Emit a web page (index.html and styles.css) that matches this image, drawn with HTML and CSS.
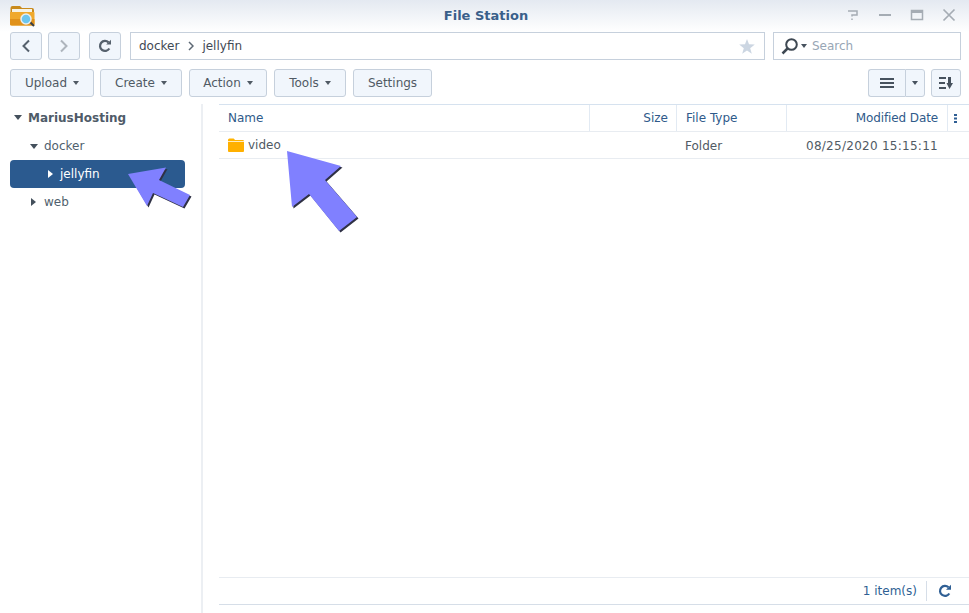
FILE: index.html
```html
<!DOCTYPE html>
<html>
<head>
<meta charset="utf-8">
<title>File Station</title>
<link rel="stylesheet" href="styles.css">
</head>
<body>
<div class="app">
  <header class="titlebar">
    <svg class="app-icon" width="26" height="22" viewBox="0 0 26 22">
      <path d="M0.5 3 Q0.5 1 2.5 1 H10 L12 3 H22 Q24 3 24 5 V8 H0.5Z" fill="#c98a1c"/>
      <rect x="2" y="4" width="20" height="4" fill="#f6f3e6"/>
      <path d="M0 7 H24 Q24.500 7 24.500 8 V19 Q24.500 20.500 23 20.500 H2 Q0 20.500 0 19Z" fill="#f0a92c"/>
      <path d="M0 14 H24.500 V19 Q24.500 20.500 23 20.500 H2 Q0 20.500 0 19Z" fill="#e0911b"/>
      <line x1="20" y1="17" x2="24" y2="21" stroke="#3a3f45" stroke-width="2"/>
      <circle cx="16" cy="14" r="5" fill="#6cc6ef" stroke="#e9eef0" stroke-width="1.500"/>
    </svg>
    <div class="title">File Station</div>
    <div class="win-ctrls">
      <svg width="14" height="14" viewBox="0 0 14 14"><path d="M2 3 H11 V7 H6 V8.500 M6 10.500 V12" fill="none" stroke="#a5acb4" stroke-width="1.500"/></svg>
      <svg width="14" height="14" viewBox="0 0 14 14"><rect x="1" y="6" width="12" height="2" fill="#a5acb4"/></svg>
      <svg width="14" height="14" viewBox="0 0 14 14"><rect x="1.500" y="2.500" width="11" height="9" fill="none" stroke="#a5acb4" stroke-width="1.500"/><rect x="1" y="2" width="12" height="3" fill="#a5acb4"/></svg>
      <svg width="14" height="14" viewBox="0 0 14 14"><path d="M1.500 1.500 L12.500 12.500 M12.500 1.500 L1.500 12.500" stroke="#a5acb4" stroke-width="1.700"/></svg>
    </div>
  </header>

  <div class="nav-row">
    <button class="btn square"><svg width="10" height="14" viewBox="0 0 10 14"><path d="M8 1.500 L2.500 7 L8 12.500" fill="none" stroke="#56616d" stroke-width="2"/></svg></button>
    <button class="btn square"><svg width="10" height="14" viewBox="0 0 10 14"><path d="M2 1.500 L7.500 7 L2 12.500" fill="none" stroke="#aeb5bd" stroke-width="2"/></svg></button>
    <button class="btn square refresh"><svg width="14" height="14" viewBox="0 0 14 14"><path d="M11.300 9.500 A5 5 0 1 1 10.500 3.300" fill="none" stroke="#56616d" stroke-width="2.300"/><path d="M8.200 5.600 H13 V0.800Z" fill="#56616d"/></svg></button>
    <div class="path-box">
      <span>docker</span>
      <svg class="crumb" width="6" height="10" viewBox="0 0 6 10"><path d="M1 1 L5 5 L1 9" fill="none" stroke="#5d6874" stroke-width="1.500"/></svg>
      <span>jellyfin</span>
      <svg class="star" width="16" height="15" viewBox="0 0 16 15"><path d="M8 0 L10 5.300 L15.800 5.600 L11.200 9.200 L12.800 14.800 L8 11.600 L3.200 14.800 L4.800 9.200 L0.200 5.600 L6 5.300Z" fill="#ccd6e2"/></svg>
    </div>
    <div class="search-box">
      <svg width="17" height="17" viewBox="0 0 17 17"><circle cx="10.500" cy="6.500" r="5.300" fill="none" stroke="#3e4852" stroke-width="2"/><line x1="6.500" y1="10.500" x2="1.500" y2="15.500" stroke="#3e4852" stroke-width="2.500"/></svg>
      <i class="caret dark"></i>
      <span>Search</span>
    </div>
  </div>

  <div class="tool-row">
    <button class="btn upload">Upload<i class="caret"></i></button>
    <button class="btn create">Create<i class="caret"></i></button>
    <button class="btn action">Action<i class="caret"></i></button>
    <button class="btn tools">Tools<i class="caret"></i></button>
    <button class="btn settings">Settings</button>
    <div class="spacer"></div>
    <div class="split">
      <button class="btn view"><svg width="14" height="10" viewBox="0 0 14 10"><path d="M0 0H14V2H0ZM0 4H14V6H0ZM0 8H14V10H0Z" fill="#47525e"/></svg></button>
      <button class="btn drop"><i class="caret dark"></i></button>
    </div>
    <button class="btn sort"><svg width="14" height="12" viewBox="0 0 14 12"><path d="M0 0H7V2H0ZM0 5H6V7H0ZM0 10H7V12H0Z" fill="#47525e"/><path d="M9 0H12V6H14L10.500 12L7.500 6H9Z" fill="#47525e"/></svg></button>
  </div>

  <div class="body">
    <aside class="tree">
      <div class="node root"><i class="tri down"></i>MariusHosting</div>
      <div class="node lvl1"><i class="tri down"></i>docker</div>
      <div class="node lvl2 selected"><i class="tri right white"></i>jellyfin</div>
      <div class="node lvl1"><i class="tri right"></i>web</div>
    </aside>
    <main class="list">
      <div class="thead">
        <div class="col c-name">Name</div>
        <div class="col c-size">Size</div>
        <div class="col c-type">File Type</div>
        <div class="col c-date"><span class="date-head">Modified Date</span></div>
        <div class="col c-more"><svg width="3" height="9" viewBox="0 0 3 9"><path d="M0 0H3V2H0ZM0 3.500H3V5.500H0ZM0 7H3V9H0Z" fill="#2f5f94"/></svg></div>
      </div>
      <div class="row">
        <div class="cell c-name">
          <svg class="folder" width="16" height="14" viewBox="0 0 17 14" preserveAspectRatio="none"><path d="M0 2 Q0 0.500 1.500 0.500 H6 L7.500 2 H15.500 Q17 2 17 3 H0Z" fill="#ffb300"/><path d="M0 3.800 H17 V13 Q17 14 16 14 H1 Q0 14 0 13Z" fill="#ffb000"/></svg>
          <span>video</span>
        </div>
        <div class="cell c-size"></div>
        <div class="cell c-type">Folder</div>
        <div class="cell c-date">08/25/2020 15:15:11</div>
        <div class="cell c-more"></div>
      </div>
      <div class="fill"></div>
      <footer class="status">
        <span>1 item(s)</span>
        <i class="sep"></i>
        <svg width="14" height="14" viewBox="0 0 14 14"><path d="M11.300 9.500 A5 5 0 1 1 10.500 3.300" fill="none" stroke="#2f5f94" stroke-width="2.200"/><path d="M8 5.800 H13 V0.800Z" fill="#2f5f94"/></svg>
      </footer>
    </main>
  </div>

  <svg class="arrow arrow-a" width="68" height="46" viewBox="0 0 68 46">
    <path d="M1 8 L39 1.500 L32 14 L63 29 L56 41 L26 27 L20 40Z" fill="#2f3145" transform="translate(1.500 1.500)"/>
    <path d="M1 8 L39 1.500 L32 14 L63 29 L56 41 L26 27 L20 40Z" fill="#8080ff"/>
  </svg>
  <svg class="arrow arrow-b" width="76" height="86" viewBox="0 0 76 86">
    <path d="M1 1 L55 16 L39 30 L71 67 L53 81 L23 44 L6 57Z" fill="#2f3145" transform="translate(1.500 1.500)"/>
    <path d="M1 1 L55 16 L39 30 L71 67 L53 81 L23 44 L6 57Z" fill="#8080ff"/>
  </svg>
</div>
</body>
</html>
```

FILE: styles.css
```css
* { box-sizing: border-box; }
html, body { margin: 0; padding: 0; height: 100%; }
body { background: #fff; font-family: "DejaVu Sans", Verdana, sans-serif; font-size: 12px; color: #505a64; overflow: hidden; }
.app { position: relative; width: 969px; height: 613px; display: flex; flex-direction: column; background: linear-gradient(#e4e9f1 0, #ffffff 32px); }

.titlebar { height: 32px; display: flex; align-items: center; position: relative; padding: 0 10px; flex: none; }
.app-icon { position: absolute; left: 10px; top: 5px; }
.title { flex: 1; text-align: center; font-weight: 700; font-size: 13px; color: #3a5f8a; padding: 0 0 2px 3px; }
.win-ctrls { position: absolute; right: 13px; top: 8px; display: flex; gap: 18px; }

.nav-row { display: flex; height: 28px; padding: 0 8px 0 10px; flex: none; }
.btn { height: 28px; border: 1px solid #c6d0dc; border-radius: 3px; background: #f1f6fc; color: #505a64; font: inherit; padding: 0; display: flex; align-items: center; justify-content: center; }
.square { width: 32px; margin-right: 6px; }
.refresh { margin-left: 3px; margin-right: 9px; }
.path-box { width: 635px; height: 28px; border: 1px solid #c6d0dc; background: #fff; display: flex; align-items: center; padding-left: 8px; gap: 8px; position: relative; color: #3f4954; }
.crumb { margin: 0 0 0 1px; }
.star { position: absolute; right: 9px; top: 6px; }
.search-box { width: 188px; margin-left: 8px; height: 28px; border: 1px solid #c6d0dc; background: #fff; display: flex; align-items: center; padding-left: 7px; gap: 3px; color: #98a6b5; }

.tool-row { display: flex; height: 28px; margin-top: 9px; padding: 0 8px 0 10px; gap: 7px; flex: none; }
.upload { width: 84px; }
.create { width: 82px; margin-left: -1px; }
.action { width: 78px; }
.tools { width: 72px; }
.settings { width: 79px; }
.spacer { flex: 1; }
.split { display: flex; margin-right: -1px; }
.view { width: 37px; border-radius: 3px 0 0 3px; border-right: 0; }
.drop { width: 20px; border-radius: 0 3px 3px 0; }
.sort { width: 30px; }

.caret { display: inline-block; width: 0; height: 0; border-left: 3.500px solid transparent; border-right: 3.500px solid transparent; border-top: 4px solid #505a64; margin-left: 6px; }
.caret.dark { border-top-color: #47525e; margin-left: 0; }
.search-box .caret { margin-right: 2px; }

.body { flex: 1; min-height: 0; display: flex; margin-top: 7px; }
.tree { width: 203px; border-right: 2px solid #eceff3; padding: 0 16px 0 10px; flex: none; }
.node { height: 28px; display: flex; align-items: center; color: #505f6e; position: relative; }
.root { font-weight: 700; padding: 0 0 1px 4px; color: #4f5b68; }
.lvl1 { padding-left: 20px; }
.lvl2 { padding-left: 37px; }
.selected { background: #2b5a8f; color: #fff; border-radius: 4px; font-weight: 400; }
.tri { display: inline-block; width: 0; height: 0; flex: none; }
.tri.down { border-left: 4px solid transparent; border-right: 4px solid transparent; border-top: 5px solid #44505c; margin-right: 6px; }
.tri.right { border-top: 4px solid transparent; border-bottom: 4px solid transparent; border-left: 5px solid #44505c; margin-right: 8px; margin-left: 1px; }
.tri.right.white { border-left-color: #fff; margin-right: 7px; }

.list { flex: 1; margin-left: 16px; display: flex; flex-direction: column; min-width: 0; }
.thead { height: 28px; border-top: 1px solid #d6e2ef; border-bottom: 1px solid #e8ecf1; display: flex; color: #2f5a8a; flex: none; }
.row { height: 27px; border-bottom: 1px solid #e8ecf1; display: flex; flex: none; }
.col, .cell { display: flex; align-items: center; padding: 0 9px; }
.col { border-left: 1px solid #e2eaf3; }
.col.c-name { border-left: 0; }
.c-name { width: 370px; }
.c-size { width: 87px; justify-content: flex-end; padding-right: 8px; }
.c-type { width: 110px; }
.c-date { width: 161px; justify-content: flex-end; }
.date-head { letter-spacing: -0.12px; }
.c-more { width: 22px; padding: 0 0 0 6px; }
.cell { color: #505a64; }
.cell.c-name { gap: 4px; }
.cell.c-type { padding-top: 1px; }
.cell.c-date { padding-top: 1px; letter-spacing: 0.27px; }
.fill { flex: 1; }
.status { height: 28px; border-top: 1px solid #e8ecf1; border-bottom: 1px solid #d6dee8; display: flex; align-items: center; justify-content: flex-end; color: #2f5f94; padding-right: 17px; margin-bottom: 8px; flex: none; }
.sep { width: 1px; height: 20px; background: #d6dee8; margin: 0 11px 0 9px; }

.arrow { position: absolute; }
.arrow-a { left: 127px; top: 166px; }
.arrow-b { left: 286px; top: 150px; }
```
